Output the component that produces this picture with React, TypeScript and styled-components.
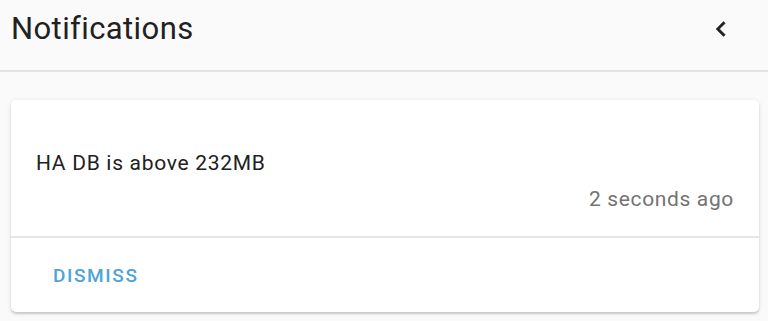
import React from 'react';
import styled, { createGlobalStyle } from 'styled-components';

const GlobalStyle = createGlobalStyle`
  html, body {
    margin: 0;
    padding: 0;
    background: #fafafa;
  }
  body {
    font-family: Roboto, "Noto Sans", "Liberation Sans", sans-serif;
    -webkit-font-smoothing: antialiased;
  }
`;

function ChevronLeft() {
  return (
    <svg width="30" height="30" viewBox="0 0 24 24" aria-hidden="true">
      <path
        fill="#212121"
        stroke="#212121"
        strokeWidth="0.4"
        d="M15.41,16.58L10.83,12L15.41,7.41L14,6L8,12L14,18L15.41,16.58Z"
      />
    </svg>
  );
}

function App() {
  return (
    <Page>
      <GlobalStyle />
      <Header>
        <Title>Notifications</Title>
        <IconButton aria-label="close">
          <ChevronLeft />
        </IconButton>
      </Header>
      <Content>
        <Card>
          <Message>HA DB is above 232MB</Message>
          <Time>2 seconds ago</Time>
          <Actions>
            <DismissButton>Dismiss</DismissButton>
          </Actions>
        </Card>
      </Content>
    </Page>
  );
}

const Page = styled.div`
  width: 768px;
  height: 321px;
  background: #fafafa;
  overflow: hidden;
`;
const Header = styled.div`
  height: 72px;
  box-sizing: border-box;
  display: flex;
  align-items: flex-start;
  justify-content: space-between;
  padding: 0 32px 0 11px;
  border-bottom: 2px solid #e2e2e2;
`;
const Title = styled.div`
  font-size: 31px;
  letter-spacing: 0.4px;
  line-height: 58px;
  color: #212121;
  font-weight: 400;
`;
const IconButton = styled.div`
  margin-top: 14px;
  width: 30px;
  height: 30px;
  display: flex;
  cursor: pointer;
`;
const Content = styled.div`
  padding: 28px 9px 0 11px;
`;
const Card = styled.div`
  background: #fff;
  border-radius: 5px;
  box-shadow: 0 2px 2px rgba(0, 0, 0, 0.14), 0 1px 5px rgba(0, 0, 0, 0.1);
  height: 212px;
  display: flex;
  flex-direction: column;
`;
const Message = styled.div`
  padding: 51px 25px 0;
  font-size: 21px;
  letter-spacing: 0.7px;
  line-height: 24px;
  color: #212121;
`;
const Time = styled.div`
  padding: 12px 25px 0;
  text-align: right;
  font-size: 21px;
  letter-spacing: 0.65px;
  line-height: 24px;
  color: #737373;
`;
const Actions = styled.div`
  margin-top: 25px;
  border-top: 2px solid #e6e6e6;
  flex: 1;
  display: flex;
  align-items: center;
  padding: 0 0 0 42px;
`;
const DismissButton = styled.div`
  text-transform: uppercase;
  font-size: 19px;
  font-weight: 500;
  letter-spacing: 1.6px;
  color: #4ea4d8;
  cursor: pointer;
`;

export default App;
